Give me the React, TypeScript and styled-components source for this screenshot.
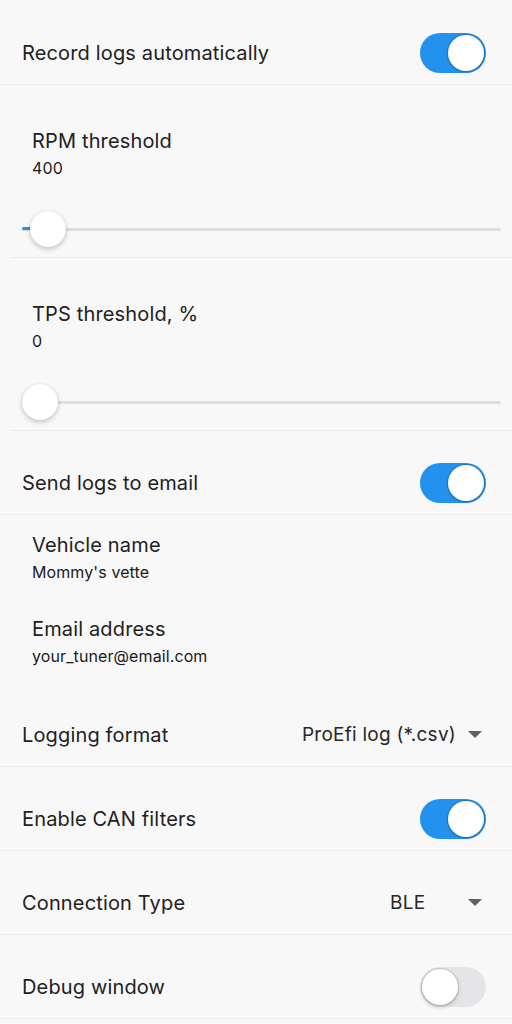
import { useState } from 'react'
import styled, { createGlobalStyle } from 'styled-components'

const GlobalStyle = createGlobalStyle`
  html, body {
    margin: 0;
    padding: 0;
    background: #f9f8f9;
  }

  body {
    font-family: Inter, 'Noto Sans', 'Liberation Sans', sans-serif;
    color: #212121;
    -webkit-font-smoothing: antialiased;
  }
`

const Page = styled.div`
  display: flex;
  flex-direction: column;
  width: 512px;
  padding-top: 1px;
  background: #f9f8f9;
`

const Row = styled.div`
  display: flex;
  align-items: center;
  justify-content: space-between;
  box-sizing: border-box;
  height: 84px;
  padding: 20px 26px 0 22px;
  border-bottom: 1px solid #ececed;
`

const Label = styled.span`
  font-size: 20px;
  line-height: 24px;
  letter-spacing: 0.15px;
  color: #212121;
`

const SwitchTrack = styled.button<{ $on: boolean }>`
  position: relative;
  width: 66px;
  height: 40px;
  padding: 0;
  border: none;
  border-radius: 20px;
  background: ${(p) => (p.$on ? '#2392ee' : '#e5e5e7')};
  cursor: pointer;
`

const SwitchThumb = styled.span<{ $on: boolean }>`
  position: absolute;
  top: 2px;
  left: ${(p) => (p.$on ? '28px' : '2px')};
  width: 36px;
  height: 36px;
  border-radius: 50%;
  background: #ffffff;
  box-shadow: ${(p) =>
    p.$on
      ? '0 0 0 1px rgba(25, 100, 170, 0.55), 0 1px 3px rgba(0, 0, 0, 0.2)'
      : '0 0 0 1px rgba(0, 0, 0, 0.12), 0 2px 4px rgba(0, 0, 0, 0.22)'};
`

const SliderSection = styled.div`
  display: flex;
  flex-direction: column;
  box-sizing: border-box;
  height: 173px;
  margin-left: 11px;
  padding: 44px 0 0 21px;
  border-bottom: 1px solid #ececed;
`

const Title = styled.div`
  font-size: 20px;
  line-height: 24px;
  letter-spacing: 0.15px;
  color: #212121;
`

const Value = styled.div`
  margin-top: 5px;
  font-size: 16px;
  line-height: 20px;
  letter-spacing: 0.1px;
  color: #1a1a1a;
`

const SliderBox = styled.div`
  position: relative;
  display: flex;
  align-items: center;
  height: 40px;
  margin: 31px 11px 0 -10px;
`

const Track = styled.div`
  flex: 1;
  height: 3px;
  border-radius: 2px;
  background: #dedee2;
`

const ActiveTrack = styled.div`
  position: absolute;
  left: 0;
  top: 18px;
  height: 3px;
  border-radius: 2px;
  background: #2392ee;
`

const SliderThumb = styled.div`
  position: absolute;
  top: 2px;
  width: 36px;
  height: 36px;
  margin-left: -18px;
  border-radius: 50%;
  background: #ffffff;
  box-shadow: 0 2px 5px rgba(0, 0, 0, 0.22), 0 0 1px rgba(0, 0, 0, 0.15);
`

const FieldGroup = styled.div`
  display: flex;
  flex-direction: column;
`

const Field = styled.div`
  display: flex;
  flex-direction: column;
  box-sizing: border-box;
  height: 84px;
  padding: 18px 0 0 32px;
`

const Dropdown = styled.div`
  display: flex;
  align-items: center;
  gap: 12px;
  margin-right: 4px;
`

const DropdownLabel = styled.span<{ $width?: number }>`
  min-width: ${(p) => (p.$width ? `${p.$width}px` : 'auto')};
  font-size: 19px;
  line-height: 24px;
  letter-spacing: 0.25px;
  color: #262626;
`

const Toggle = ({ on }: { on: boolean }) => {
  const [value, setValue] = useState(on)
  return (
    <SwitchTrack $on={value} onClick={() => setValue(!value)}>
      <SwitchThumb $on={value} />
    </SwitchTrack>
  )
}

const ToggleRow = ({ label, on }: { label: string; on: boolean }) => (
  <Row>
    <Label>{label}</Label>
    <Toggle on={on} />
  </Row>
)

// thumb travels inside the track, so its centre stays 18px from each end
const Slider = ({ fraction }: { fraction: number }) => {
  const thumbLeft = `calc(18px + (100% - 36px) * ${fraction})`
  return (
    <SliderBox>
      <Track />
      {fraction > 0 && <ActiveTrack style={{ width: thumbLeft }} />}
      <SliderThumb style={{ left: thumbLeft }} />
    </SliderBox>
  )
}

const SliderSetting = ({
  title,
  value,
  fraction,
}: {
  title: string
  value: string
  fraction: number
}) => (
  <SliderSection>
    <Title>{title}</Title>
    <Value>{value}</Value>
    <Slider fraction={fraction} />
  </SliderSection>
)

const ArrowDown = () => (
  <svg width="14" height="7" viewBox="0 0 14 7">
    <polygon points="0,0 14,0 7,7" fill="#616161" />
  </svg>
)

const DropdownRow = ({
  label,
  value,
  width,
}: {
  label: string
  value: string
  width?: number
}) => (
  <Row>
    <Label>{label}</Label>
    <Dropdown>
      <DropdownLabel $width={width}>{value}</DropdownLabel>
      <ArrowDown />
    </Dropdown>
  </Row>
)

const App = () => {
  return (
    <>
      <GlobalStyle />
      <Page>
        <ToggleRow label="Record logs automatically" on />
        <SliderSetting title="RPM threshold" value="400" fraction={0.018} />
        <SliderSetting title="TPS threshold, %" value="0" fraction={0} />
        <ToggleRow label="Send logs to email" on />
        <FieldGroup>
          <Field>
            <Title>Vehicle name</Title>
            <Value>Mommy's vette</Value>
          </Field>
          <Field>
            <Title>Email address</Title>
            <Value>your_tuner@email.com</Value>
          </Field>
        </FieldGroup>
        <DropdownRow label="Logging format" value="ProEfi log (*.csv)" />
        <ToggleRow label="Enable CAN filters" on />
        <DropdownRow label="Connection Type" value="BLE" width={66} />
        <ToggleRow label="Debug window" on={false} />
      </Page>
    </>
  )
}

export default App
